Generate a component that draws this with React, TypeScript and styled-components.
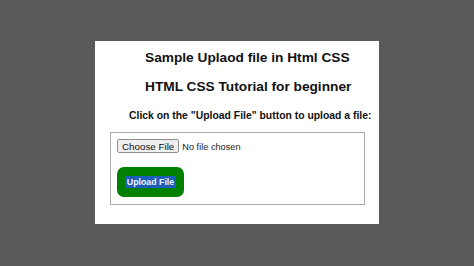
import React from "react";
import styled, {createGlobalStyle} from "styled-components";

const GlobalStyle = createGlobalStyle`
    html, body {
        margin: 0;
        padding: 0;
        background: #5a5a5a;
        font-family: "Liberation Sans", Arial, sans-serif;
    }
`

export default function App() {
    return (
        <>
            <GlobalStyle/>
            <Page>
                <Panel>
                    <Title>Sample Uplaod file in Html CSS</Title>
                    <Title>HTML CSS Tutorial for beginner</Title>
                    <Hint>Click on the "Upload File" button to upload a file:</Hint>
                    <UploadForm>
                        <FileInput type="file"/>
                        <UploadButton type="button">
                            <Selected>Upload File</Selected>
                        </UploadButton>
                    </UploadForm>
                </Panel>
            </Page>
        </>
    );
}

const Page = styled.div`
    width: 474px;
    height: 266px;
    padding-top: 41px;
    box-sizing: border-box;
`

const Panel = styled.div`
    width: 284px;
    height: 183px;
    margin: 0 auto;
    background: #ffffff;
    padding-top: 7px;
    box-sizing: border-box;
    display: flex;
    flex-direction: column;
`

const Title = styled.h2`
    margin: 0 0 9px 50px;
    font-size: 13.7px;
    line-height: 20px;
    font-weight: bold;
    color: #111;
`

const Hint = styled.h3`
    margin: 3px 0 9px 34px;
    font-size: 10.4px;
    line-height: 14px;
    font-weight: bold;
    color: #111;
`

const UploadForm = styled.form`
    width: 255px;
    margin-left: 15px;
    border: 1px solid #a9a9a9;
    padding: 6px 6px 7px;
    box-sizing: border-box;
    display: flex;
    flex-direction: column;
    align-items: flex-start;
    gap: 14px;
`

const FileInput = styled.input`
    height: 14px;
    font-family: "Liberation Sans", Arial, sans-serif;
    font-size: 9.2px;
    color: #222;

    &::file-selector-button {
        height: 14px;
        margin-right: 3px;
        padding: 0 4px;
        font-family: inherit;
        font-size: 9.8px;
        background: #efefef;
        border: 1px solid #8f8f8f;
        border-radius: 2px;
        color: #111;
    }
`

const UploadButton = styled.button`
    width: 67px;
    height: 30px;
    padding: 0;
    border: none;
    border-radius: 7px;
    background: #008000;
    display: flex;
    align-items: center;
    justify-content: center;
    font-family: "Liberation Sans", Arial, sans-serif;
    font-size: 8.8px;
    font-weight: bold;
    color: #fff;
`

const Selected = styled.span`
    background: #1d5fb8;
    color: #eef4ff;
    padding: 0 2px;
    line-height: 12px;
`
